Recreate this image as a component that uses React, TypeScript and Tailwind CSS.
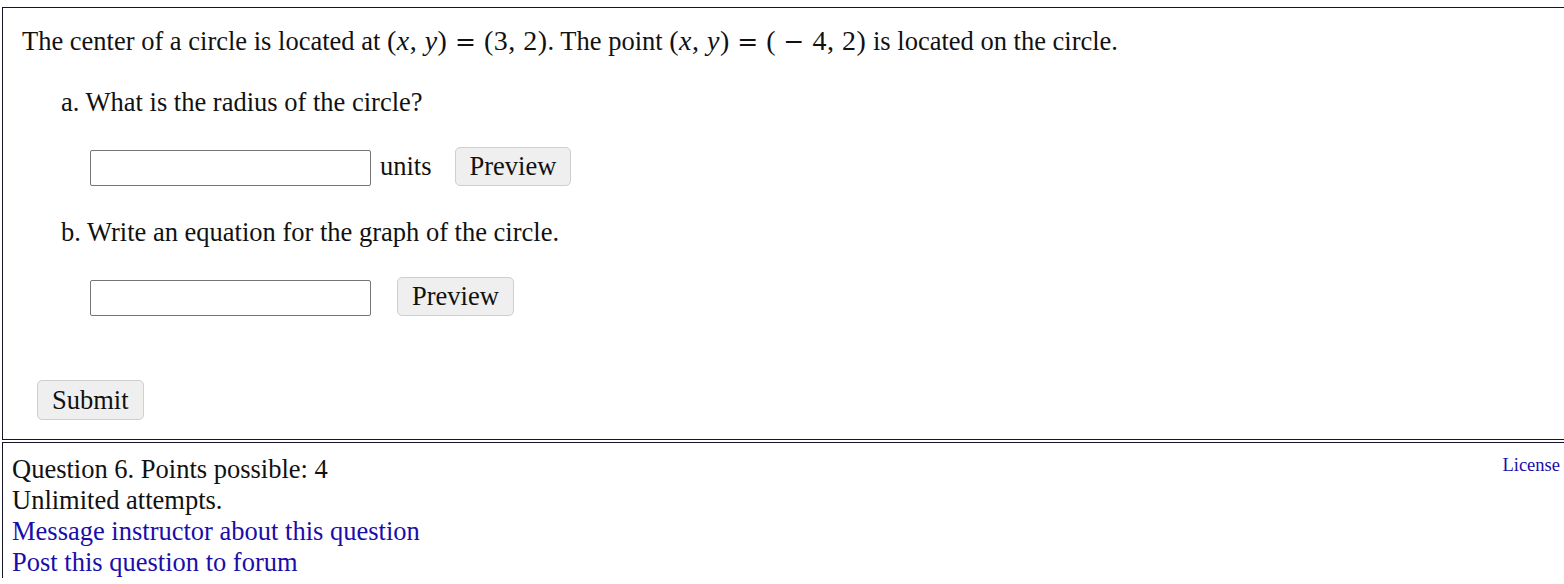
import React from 'react'

const serif = "font-['Liberation_Serif','Times_New_Roman',serif]"

const M = ({ children }: { children: React.ReactNode }) => (
  <span className="text-[28px] tracking-[0.5px]">{children}</span>
)
const I = ({ children }: { children: React.ReactNode }) => <span className="italic">{children}</span>

// operators drawn wider, like the math renderer does
const Op = ({ children }: { children: React.ReactNode }) => (
  <span className="font-['DejaVu_Serif',serif] text-[25px]">{children}</span>
)

const Pair = () => (
  <M>
    (<I>x</I>, <I>y</I>)
  </M>
)

const Eq = () => (
  <M>
    &nbsp;<Op>=</Op>&nbsp;
  </M>
)

const Btn = ({ label, className = '' }: { label: string; className?: string }) => (
  <button
    className={`h-[39px] px-[14px] rounded-[5px] border border-[#cfcfcf] bg-[#efefef] text-[26.5px] text-[#111] leading-none ${className}`}
  >
    {label}
  </button>
)

const Field = () => (
  <input
    type="text"
    className="w-[281px] h-[36px] border border-[#767676] rounded-[2px] bg-white outline-none"
  />
)

export default function App() {
  return (
    <div className={`w-full h-[584px] overflow-hidden bg-white text-[#111] ${serif}`}>
      <div className="mt-[7px] ml-[2px] border-l border-t border-b border-[#15152a] pl-[19px] pt-[17px] pb-[19px]">
        <p className="text-[26.5px] leading-[31px]">
          The center of a circle is located at <Pair />
          <Eq />
          <M>(3, 2)</M>. The point <Pair />
          <Eq />
          <M>
            ( <Op>−</Op> 4, 2)
          </M>{' '}
          is located on the circle.
        </p>

        <p className="mt-[30px] ml-[39px] text-[26.5px] leading-[31px]">a. What is the radius of the circle?</p>
        <div className="mt-[29px] ml-[68px] flex items-end">
          <Field />
          <span className="ml-[9px] text-[26.5px] leading-[31px] self-center">units</span>
          <Btn label="Preview" className="ml-[23px]" />
        </div>

        <p className="mt-[31px] ml-[39px] text-[26.5px] leading-[31px]">b. Write an equation for the graph of the circle.</p>
        <div className="mt-[29px] ml-[68px] flex items-end">
          <Field />
          <Btn label="Preview" className="ml-[26px]" />
        </div>

        <Btn label="Submit" className="mt-[64px] ml-[15px] h-[40px]" />
      </div>

      <div className="mt-[2px] ml-[2px] border-l border-t border-[#15152a] pl-[9px] pt-[11px] flex justify-between">
        <div className="text-[26.5px] leading-[31px]">
          <div>Question 6. Points possible: 4</div>
          <div>Unlimited attempts.</div>
          <a className="block text-[#1a0dab]">Message instructor about this question</a>
          <a className="block text-[#1a0dab]">Post this question to forum</a>
        </div>
        <a className="text-[18.5px] leading-[20px] text-[#1a0dab] mr-[4px] mt-[1px]">License</a>
      </div>
    </div>
  )
}
